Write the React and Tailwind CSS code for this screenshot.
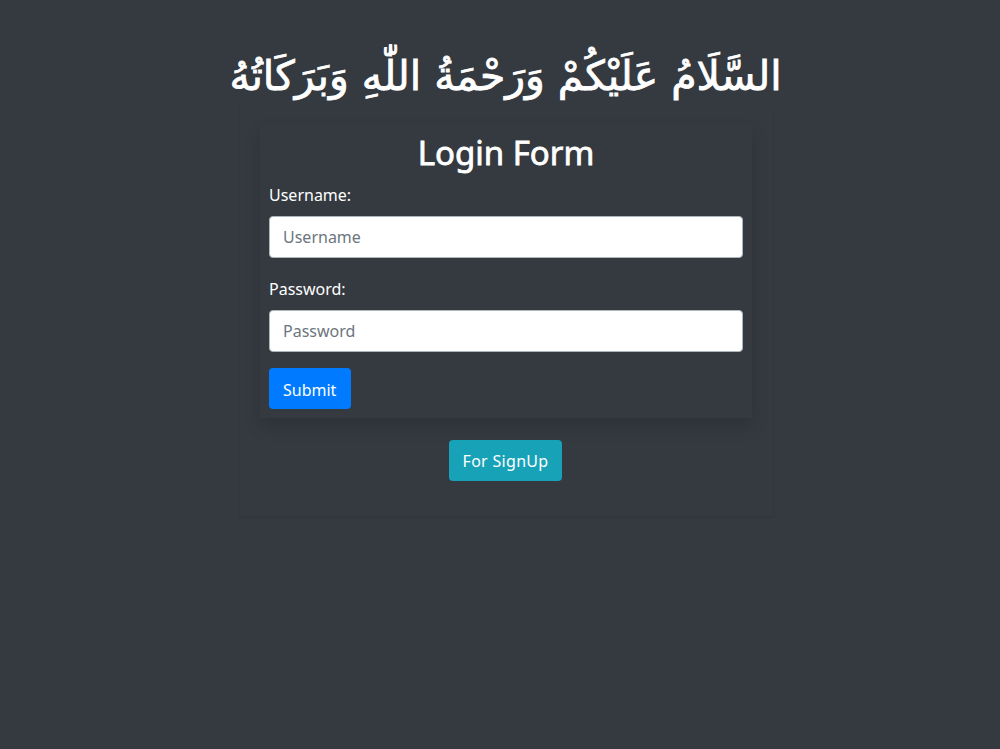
import React from 'react';

const App = () => {
  return (
    <div className="min-h-[749px] bg-[#343a40] font-['Noto_Sans','Open_Sans',sans-serif] text-white pt-[44px]">
      <h1 dir="rtl" className="text-center text-[41px] leading-[60px] font-normal font-['DejaVu_Sans',sans-serif] [-webkit-text-stroke:0.8px_white] h-[61px] ml-[11px] pt-[2px] whitespace-nowrap">
        السَّلَامُ عَلَيْكُمْ وَرَحْمَةُ اللّٰهِ وَبَرَكَاتُهُ
      </h1>
      <div className="ml-[240px] w-[533px] h-[411px] px-[20px] pt-[20px] shadow-[0_1px_2px_rgba(0,0,0,0.1)]">
        <div className="w-[492px] h-[293px] p-[9px] shadow-[0_8px_16px_rgba(0,0,0,0.15)]">
          <h2 className="text-center text-[33px] leading-[38px] font-normal [-webkit-text-stroke:0.8px_white] mb-[10px]">Login Form</h2>
          <form>
            <div className="mb-[18.5px]">
              <label className="block text-[16px] leading-[26px] mb-[8px]">Username:</label>
              <input
                type="text"
                placeholder="Username"
                className="block w-full h-[41.5px] px-[13px] pt-[1px] bg-white rounded-[4px] border border-[#adb5bd] text-[16px] text-[#495057] placeholder:text-[#6c757d] outline-none"
              />
            </div>
            <div className="mb-[16.5px]">
              <label className="block text-[16px] leading-[26px] mb-[8px]">Password:</label>
              <input
                type="password"
                placeholder="Password"
                className="block w-full h-[41.5px] px-[13px] pt-[1px] bg-white rounded-[4px] border border-[#adb5bd] text-[16px] text-[#495057] placeholder:text-[#6c757d] outline-none"
              />
            </div>
            <button type="button" className="h-[41px] pl-[14px] pr-[15px] pt-[2px] bg-[#007bff] rounded-[4px] text-[16px] text-white">
              Submit
            </button>
          </form>
        </div>
        <div className="flex justify-center mt-[22px] pr-[2px]">
          <a href="#" className="h-[41px] px-[14px] flex items-center bg-[#17a2b8] rounded-[4px] text-[16px] tracking-[0.3px] text-white">
            For SignUp
          </a>
        </div>
      </div>
    </div>
  );
};

export default App;
